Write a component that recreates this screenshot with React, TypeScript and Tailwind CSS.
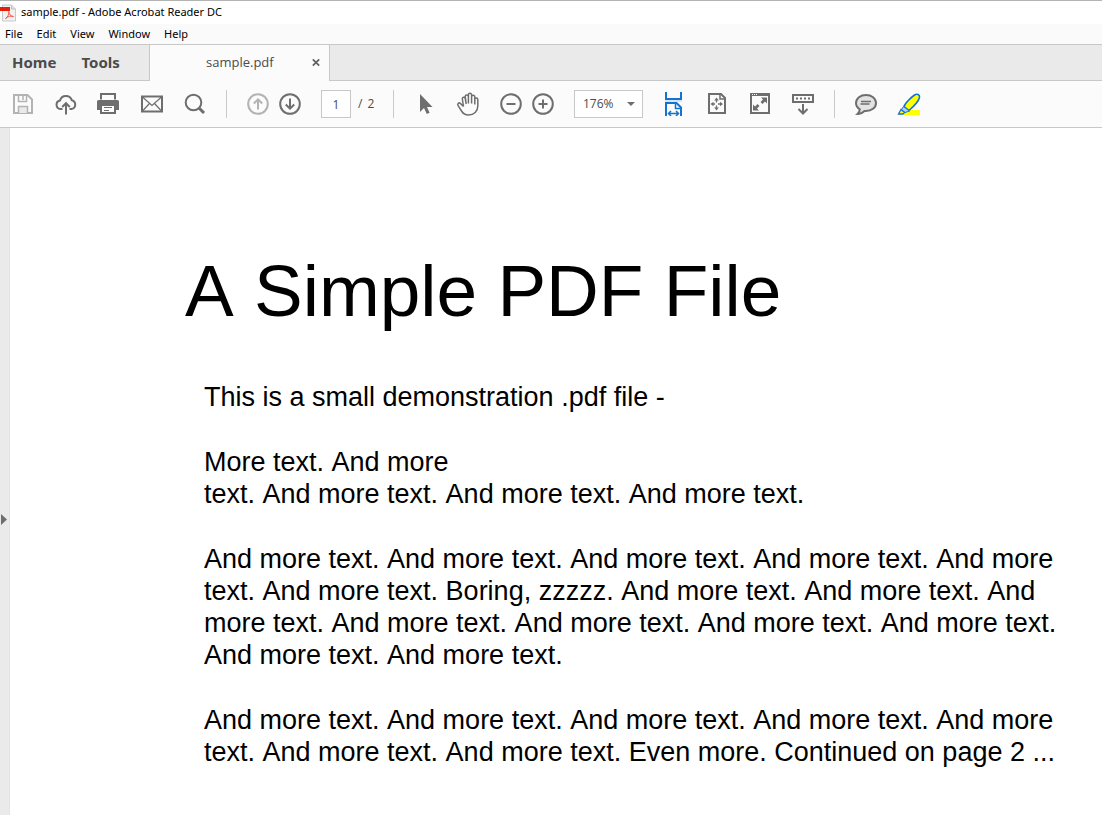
import type { ReactNode } from "react";

function Tool({ label, color = "text-[#6e6e6e]", children }: { label: string; color?: string; children: ReactNode }) {
  return (
    <button type="button" aria-label={label} className={`shrink-0 ${color}`}>
      <svg viewBox="0 0 24 24" fill="none" stroke="currentColor" strokeWidth="2" className="block w-6 h-6">
        {children}
      </svg>
    </button>
  );
}

function Divider() {
  return <div className="w-px h-7 shrink-0 bg-[#cacaca]" />;
}

function TitleBar() {
  return (
    <div className="flex items-center h-6 border-t border-[#b4b4b4] bg-white text-[11px] text-black">
      <svg viewBox="0 0 16 18" className="w-4 h-[18px] mr-[5px]">
        <path d="M2.5 1h9l4 4v12h-13z" fill="#f1f1f1" stroke="#c9c9c9" />
        <path d="M11.5 1v4h4" fill="#dedede" stroke="#c0c0c0" />
        <path d="M0 3h10v4H0z" fill="#e3200b" />
        <path d="M5.500 14.500C8 13 9 10 8.800 7.500C9 10.500 11 12.500 13.500 12.500C10.500 11.500 8 12.500 5.500 14.500" fill="none" stroke="#ee5a4c" />
      </svg>
      <span>sample.pdf - Adobe Acrobat Reader DC</span>
    </div>
  );
}

function MenuBar() {
  return (
    <nav className="flex items-center h-5 gap-[14px] px-[5px] bg-[#fafafa] text-[11px] text-black">
      <button type="button">File</button>
      <button type="button">Edit</button>
      <button type="button">View</button>
      <button type="button">Window</button>
      <button type="button">Help</button>
    </nav>
  );
}

function Tabs() {
  return (
    <div className="flex h-[37px] border-t border-[#c8c8c8] text-[#4b4b4b]">
      <div className="flex items-center w-[150px] gap-[25px] pl-3 border-r border-b border-[#c8c8c8] bg-[#eaeaea] text-[15px] font-bold">
        <button type="button">Home</button>
        <button type="button">Tools</button>
      </div>
      <div className="flex items-center justify-between w-[179px] pl-14 pr-2 bg-[#fbfbfb] font-['Open_Sans',sans-serif] text-[13px]">
        <span>sample.pdf</span>
        <button type="button" aria-label="Close tab">
          <svg viewBox="0 0 10 10" className="block w-[10px] h-[10px]" fill="none" stroke="#606060" strokeWidth="1.700">
            <path d="M1.800 1.300l6.400 6.400M8.200 1.300l-6.400 6.400" />
          </svg>
        </button>
      </div>
      <div className="flex-1 border-l border-b border-[#c8c8c8] bg-[#eaeaea]" />
    </div>
  );
}

function Toolbar() {
  return (
    <div className="flex items-center h-[47px] gap-[19px] pl-[11px] border-b border-[#c8c8c8] bg-[#fbfbfb]">
      <Tool label="Save" color="text-[#b3b3b3]">
        <path d="M3 3h13.500l4.500 4.500V21H3z" />
        <path d="M7.500 3v6.500h8V3M12 4v4" strokeWidth="1.500" />
        <path d="M7.500 21v-6.500h9V21" fill="#eaeaea" strokeWidth="1.500" />
      </Tool>
      <Tool label="Share">
        <path d="M8.500 17H6.500a4.300 4.300 0 0 1-.5-8.500a6.200 6.200 0 0 1 11.800-.3a4.500 4.500 0 0 1-.3 8.800H15.500" />
        <path d="M12 22.500V11.500M8.200 15l3.800-3.800l3.800 3.800" />
      </Tool>
      <Tool label="Print">
        <path d="M4 7.500V2h14v5.500" />
        <path d="M1.500 8h19a1.500 1.500 0 0 1 1.500 1.500V18h-3v-4H3v4H0V9.500A1.500 1.500 0 0 1 1.500 8z" fill="currentColor" stroke="none" />
        <path d="M4 13h14v8H4z" fill="#fff" />
        <path d="M7 15.500h8M7 18.500h5" strokeWidth="1.200" />
      </Tool>
      <Tool label="Email">
        <path d="M2 4.500h20v15H2z" />
        <path d="M2.500 5l9.500 8.500l9.500-8.500M2.500 19l7-7.500M21.500 19l-7-7.500" strokeWidth="1.200" />
      </Tool>
      <Tool label="Find">
        <circle cx="10.500" cy="10.500" r="7.800" />
        <path d="M16 16l5 5" strokeWidth="3" />
      </Tool>
      <Divider />
      <div className="flex gap-2">
        <Tool label="Previous page" color="text-[#b3b3b3]">
          <circle cx="12" cy="12" r="9.800" />
          <path d="M12 17.500V7.500M7.800 11.500l4.200-4.200l4.200 4.200" />
        </Tool>
        <Tool label="Next page">
          <circle cx="12" cy="12" r="9.800" />
          <path d="M12 6.500v10M7.800 12.500l4.200 4.200l4.200-4.200" />
        </Tool>
      </div>
      <div className="flex items-center shrink-0 w-[53px] gap-[7px] font-['Open_Sans',sans-serif] text-xs text-[#4b4b4b]">
        <input aria-label="Page number" defaultValue="1" className="w-[30px] h-7 border border-[#c8c8c8] bg-white text-center" />
        <span className="flex gap-[5px]"><span>/</span> <span>2</span></span>
      </div>
      <Divider />
      <Tool label="Select">
        <path d="M7 2v18l4-4l2.800 6l2.800-1.200L14 15h5.500z" fill="currentColor" stroke="none" />
      </Tool>
      <Tool label="Hand">
        <path
          d="M7.500 14.500L4.300 11.400a1.500 1.500 0 0 0-2.300 1.900L5.500 19c1.600 2.700 4 4 7 4c5.500 0 9.300-3.500 9.300-9V7.500a1.500 1.500 0 0 0-3 0V4.800a1.600 1.600 0 0 0-3.200 0V2.800a1.600 1.600 0 0 0-3.200 0V4.500a1.600 1.600 0 0 0-3.200 0v1.300M7.500 14.500L6.300 6.800a1.500 1.500 0 0 1 2.900-.6l1 5.800M9.200 4.500L10.200 12M12.400 4v7.500M15.600 4.800v6.700M18.800 7.500v5"
          strokeWidth="1.500"
        />
      </Tool>
      <div className="flex gap-2">
        <Tool label="Zoom out">
          <circle cx="12" cy="12" r="9.800" />
          <path d="M7.500 12h9" />
        </Tool>
        <Tool label="Zoom in">
          <circle cx="12" cy="12" r="9.800" />
          <path d="M7.500 12h9M12 7.500v9" />
        </Tool>
      </div>
      <div className="relative shrink-0">
        <select aria-label="Zoom level" className="block appearance-none w-[69px] h-7 pl-2 border border-[#c8c8c8] bg-white font-['Open_Sans',sans-serif] text-xs text-[#4b4b4b]">
          <option>176%</option>
        </select>
        <svg viewBox="0 0 8 4" className="absolute right-2 top-3 w-2 h-1 pointer-events-none" fill="#6e6e6e">
          <path d="M0 0h8l-4 4z" />
        </svg>
      </div>
      <Tool label="Fit width" color="text-[#1473d0]">
        <path d="M3 9h17" stroke="#d5e5f5" />
        <path d="M4 0v7h15V0M4 24V11h10.500l4.500 4.500V24" />
        <path d="M13.500 11v5.500H19M6.500 21.500h10M9 19l-2.500 2.500L9 24M14 19l2.500 2.500L14 24" strokeWidth="1.500" />
      </Tool>
      <Tool label="Fit page">
        <path d="M4 2h12l4 4v15H4z" />
        <path d="M15 2v5h5" strokeWidth="1.500" />
        <path d="M11.500 5.500l2.300 3H9.200zM11.500 18.500l2.300-3H9.200zM5.500 12l3-2.300v4.600zM18 12l-3-2.300v4.600z" fill="currentColor" stroke="none" />
        <path d="M11.500 8v2.500M11.500 13.500V16M8 12h2M13 12h2.500" strokeWidth="1.300" />
      </Tool>
      <Tool label="Full screen">
        <path d="M3 2h18v19H3z" />
        <path d="M2 1h20v3H2z" fill="currentColor" stroke="none" />
        <path d="M4 2.500h1M6 2.500h1M8 2.500h1" stroke="#fbfbfb" strokeWidth="1" />
        <path d="M19 5.500v6l-2-2l-2.500 2.500l-2-2L15 7.500l-2-2zM5 18.500v-6l2 2L9.500 12l2 2L9 16.500l2 2z" fill="currentColor" stroke="none" />
      </Tool>
      <Tool label="Read mode">
        <path d="M2 3h20v7H2z" />
        <path d="M5 6.500h2M9 6.500h2M13 6.500h2M17 6.500h2" />
        <path d="M12 12v9M7.500 17l4.500 4.500l4.500-4.500" />
      </Tool>
      <Divider />
      <Tool label="Comment">
        <path d="M12 3C17.500 3 22 6.200 22 11S17.500 19 12 19l-1.500 0C8.500 21 6 22.300 3.500 22C5 20.800 5.800 19.200 5.800 17.300C3.500 15.800 2 13.600 2 11C2 6.200 6.500 3 12 3z" fill="#e3e3e3" />
        <path d="M7 9.500h10M6.500 12h9" strokeWidth="1.300" />
      </Tool>
      <Tool label="Highlight" color="text-[#1473d0]">
        <path d="M9 18h14v5H6z" fill="#ffff00" stroke="none" />
        <path d="M7 14.500C8 11.500 14 5.500 17.500 3C20 1.500 23 2.500 22.500 5.500C21.500 9 15.500 15.500 12 18.500z" fill="#ffff00" strokeWidth="1.600" />
        <path d="M6.500 14.500l6 4.500l-4.500 1.500l-3.500-3z" fill="#b5d0ec" strokeWidth="1" />
        <path d="M1.500 22l2.500-4.500l3.500 3L6 22z" fill="#ffff00" strokeWidth="1.300" />
      </Tool>
    </div>
  );
}

function Page() {
  return (
    <div className="flex flex-1">
      <button type="button" aria-label="Show navigation pane" className="flex items-center shrink-0 w-[10px] pt-[94px] border-r border-[#e4e4e4] bg-[#eaeaea]">
        <svg viewBox="0 0 7 11" className="w-[7px] h-[11px]" fill="#6e6e6e">
          <path d="M1 0l6 5.500l-6 5.500z" />
        </svg>
      </button>
      <main className="flex-1 pt-[121px] pl-[194px] pb-12 bg-white font-['Liberation_Sans',Arial,sans-serif] text-black [font-kerning:none]">
        <h1 className="-ml-[19px] text-[73px] leading-[84px]">A Simple PDF File</h1>
        <div className="pt-12 space-y-[33px] text-[27px] leading-8 whitespace-nowrap">
          <p>This is a small demonstration .pdf file -</p>
          <p>
            More text. And more<br />
            text. And more text. And more text. And more text.
          </p>
          <p>
            And more text. And more text. And more text. And more text. And more<br />
            text. And more text. Boring, zzzzz. And more text. And more text. And<br />
            more text. And more text. And more text. And more text. And more text.<br />
            And more text. And more text.
          </p>
          <p>
            And more text. And more text. And more text. And more text. And more<br />
            text. And more text. And more text. Even more. Continued on page 2 ...
          </p>
        </div>
      </main>
    </div>
  );
}

export default function App() {
  return (
    <div className="flex flex-col min-h-screen overflow-x-hidden font-['Noto_Sans',sans-serif]">
      <TitleBar />
      <MenuBar />
      <Tabs />
      <Toolbar />
      <Page />
    </div>
  );
}
